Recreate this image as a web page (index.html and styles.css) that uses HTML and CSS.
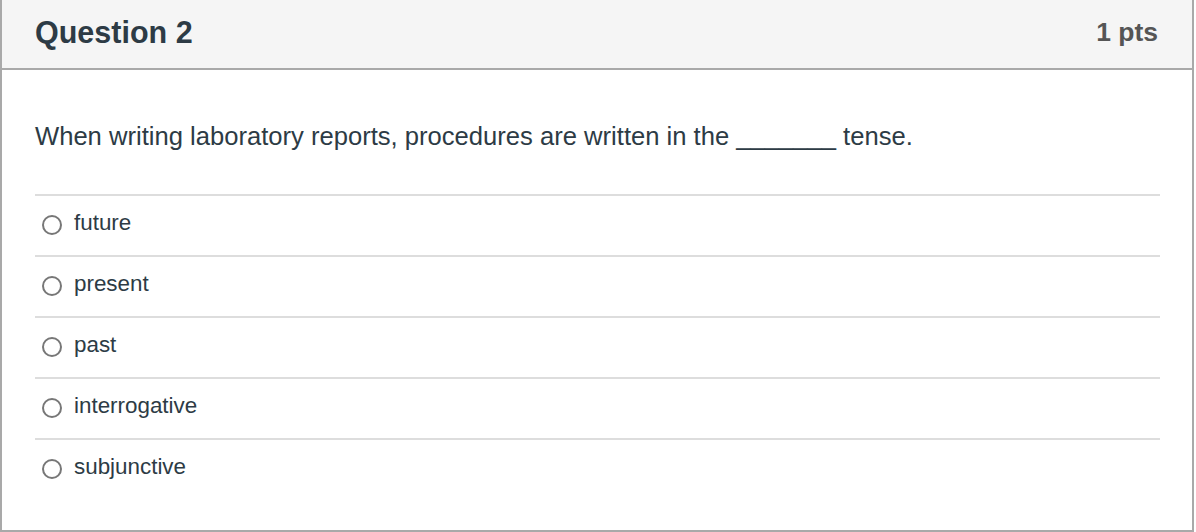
FILE: index.html
```html
<!DOCTYPE html>
<html>
<head>
<meta charset="utf-8">
<link rel="stylesheet" href="styles.css">
</head>
<body>
<div class="quiz">
  <div class="header">
    <span class="title">Question 2</span>
    <span class="pts">1 pts</span>
  </div>
  <div class="content">
    <p class="qtext">When writing laboratory reports, procedures are written in the _______ tense.</p>
    <div class="answers">
      <div class="answer"><span class="radio"></span><span class="label">future</span></div>
      <div class="answer"><span class="radio"></span><span class="label">present</span></div>
      <div class="answer"><span class="radio"></span><span class="label">past</span></div>
      <div class="answer"><span class="radio"></span><span class="label">interrogative</span></div>
      <div class="answer"><span class="radio"></span><span class="label">subjunctive</span></div>
    </div>
  </div>
</div>
</body>
</html>
```

FILE: styles.css
```css
html, body {
  margin: 0;
  padding: 0;
  background: #ffffff;
}
body {
  font-family: "Liberation Sans", Arial, sans-serif;
  color: #2d3b45;
}
.quiz {
  box-sizing: border-box;
  width: 1194px;
  height: 532px;
  border: 2px solid #a9a9a9;
  border-top: none;
  background: #fff;
}
.header {
  box-sizing: border-box;
  height: 70px;
  background: #f5f5f5;
  border-bottom: 2px solid #a9a9a9;
  display: flex;
  justify-content: space-between;
  align-items: center;
  padding: 0 34px 3px 33px;
}
.title {
  font-size: 30.5px;
  font-weight: bold;
  color: #2d3b45;
}
.pts {
  font-size: 26.5px;
  font-weight: bold;
  color: #555555;
}
.content {
  padding: 0 32px 0 33px;
}
.qtext {
  margin: 0;
  padding-top: 47px;
  padding-bottom: 39px;
  font-size: 25.6px;
  line-height: 38px;
  color: #2d3b45;
}
.answer {
  box-sizing: border-box;
  height: 61px;
  border-top: 2px solid #dddddd;
  display: flex;
  align-items: center;
  padding-left: 7px;
  padding-bottom: 5px;
}
.radio {
  box-sizing: border-box;
  width: 20px;
  height: 20px;
  border: 2px solid #777777;
  border-radius: 50%;
  flex: none;
  margin-top: 4px;
}
.label {
  margin-left: 12px;
  font-size: 22.4px;
  color: #2d3b45;
}
```
